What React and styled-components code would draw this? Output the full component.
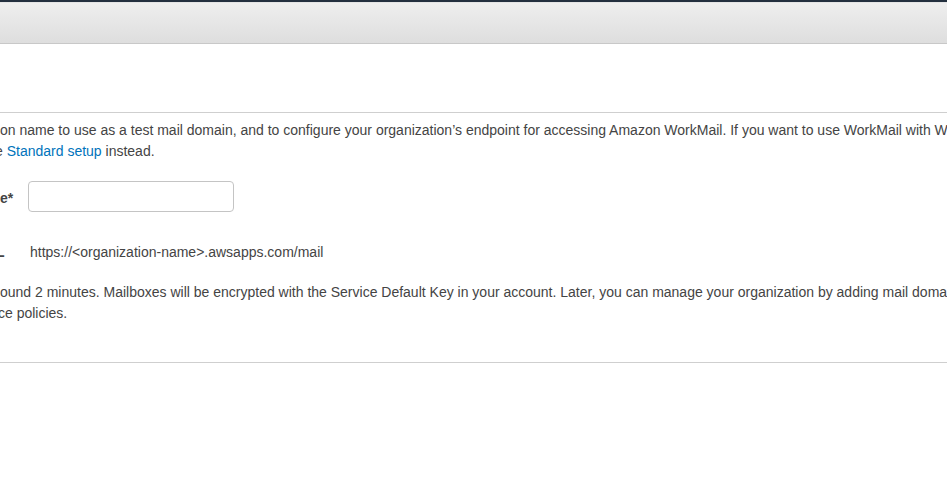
import React from 'react'
import styled, { createGlobalStyle } from 'styled-components'

const GlobalStyle = createGlobalStyle`
  html, body {
    margin: 0;
    padding: 0;
    background: #fff;
  }
  body {
    font-family: "Liberation Sans", Arial, sans-serif;
    font-size: 14px;
    color: #444;
    overflow: hidden;
  }
`

const Page = styled.div`
  width: 947px;
  height: 497px;
  overflow: hidden;
`

const TopBar = styled.div`
  height: 2px;
  background: #232f3e;
`

const Toolbar = styled.div`
  height: 40px;
  background: linear-gradient(to bottom, #eeeeee, #dedede);
  border-top: 1px solid #e4e4e4;
  border-bottom: 1px solid #c8c8c8;
`

const Heading = styled.div`
  height: 68px;
  border-bottom: 1px solid #cfcfcf;
`

const Body = styled.div`
  padding-top: 7px;
  border-bottom: 1px solid #cfcfcf;
  padding-bottom: 38px;
`

const Line = styled.div`
  white-space: nowrap;
  line-height: 21px;
  margin-left: ${p => p.$shift || 0}px;
`

const Link = styled.a`
  color: #0073bb;
  text-decoration: none;
`

const Para = styled.div`
  margin-bottom: ${p => p.$gap || 0}px;
`

const FormRow = styled.div`
  display: flex;
  align-items: center;
  height: ${p => p.$h}px;
  margin-bottom: ${p => p.$gap || 0}px;
`

const Label = styled.div`
  width: 28px;
  flex: none;
  font-weight: bold;
  color: #444;
  overflow: hidden;
  white-space: nowrap;
  text-indent: ${p => p.$indent || 0}px;
  padding-top: ${p => p.$drop || 0}px;
`

const Input = styled.input`
  width: 206px;
  height: 31px;
  box-sizing: border-box;
  border: 1px solid #c4c4c4;
  border-radius: 4px;
  padding: 0 8px;
  font: inherit;
  outline: none;
`

const Value = styled.div`
  padding-left: 2px;
  white-space: nowrap;
`

export default function App() {
  return (
    <Page>
      <GlobalStyle />
      <TopBar />
      <Toolbar />
      <Heading />
      <Body>
        <Para $gap={19}>
          <Line>
            on name to use as a test mail domain, and to configure your organization’s endpoint for accessing Amazon WorkMail. If you want to use WorkMail with Windows users
          </Line>
          <Line $shift={-5}>
            e <Link href="#">Standard setup</Link> instead.
          </Line>
        </Para>
        <FormRow $h={31} $gap={29}>
          <Label $drop={3}>e*</Label>
          <Input type="text" />
        </FormRow>
        <FormRow $h={21} $gap={20}>
          <Label $indent={-4}>L</Label>
          <Value>https://&lt;organization-name&gt;.awsapps.com/mail</Value>
        </FormRow>
        <Para>
          <Line>
            ound 2 minutes. Mailboxes will be encrypted with the Service Default Key in your account. Later, you can manage your organization by adding mail domains
          </Line>
          <Line $shift={-2}>ce policies.</Line>
        </Para>
      </Body>
    </Page>
  )
}
